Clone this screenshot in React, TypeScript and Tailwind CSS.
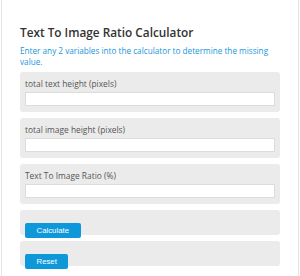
import React from 'react'

const fields = [
  'total text height (pixels)',
  'total image height (pixels)',
  'Text To Image Ratio (%)',
]

export default function App() {
  return (
    <div className="w-[300px] h-[276px] bg-white px-[1px]">
      <div className="h-full border-x border-[#e6e6e6] px-[18px] pt-[24px] font-['Open_Sans',sans-serif]">
        <h1 className="text-[11.8px] leading-[16px] font-semibold text-[#333333]">
          Text To Image Ratio Calculator
        </h1>
        <p className="mt-[5px] text-[8.2px] leading-[11px] text-[#2196d8]">
          Enter any 2 variables into the calculator to determine the missing value.
        </p>

        <div className="mt-[5px] flex flex-col gap-[6px]">
          {fields.map((label) => (
            <div key={label} className="h-[40px] rounded-[3px] bg-[#ebebeb] px-[5px] pt-[6px]">
              <div className="text-[8.4px] leading-[12px] text-[#555555]">{label}</div>
              <input
                type="text"
                className="mt-[2px] block h-[14px] w-full border border-[#dcdcdc] bg-white outline-none"
              />
            </div>
          ))}
          <div className="h-[25px] rounded-[3px] bg-[#ebebeb] px-[5px] pt-[5px]">
            <button className="h-[15px] rounded-[2px] bg-[#0e98da] px-[11.5px] font-['Liberation_Sans',sans-serif] text-[7.8px] leading-[15px] text-white">
              Calculate
            </button>
          </div>
          <div className="h-[25px] rounded-[3px] bg-[#ebebeb] px-[5px] pt-[5px]">
            <button className="h-[15px] rounded-[2px] bg-[#0e98da] px-[11.5px] font-['Liberation_Sans',sans-serif] text-[7.8px] leading-[15px] text-white">
              Reset
            </button>
          </div>
        </div>
      </div>
    </div>
  )
}
